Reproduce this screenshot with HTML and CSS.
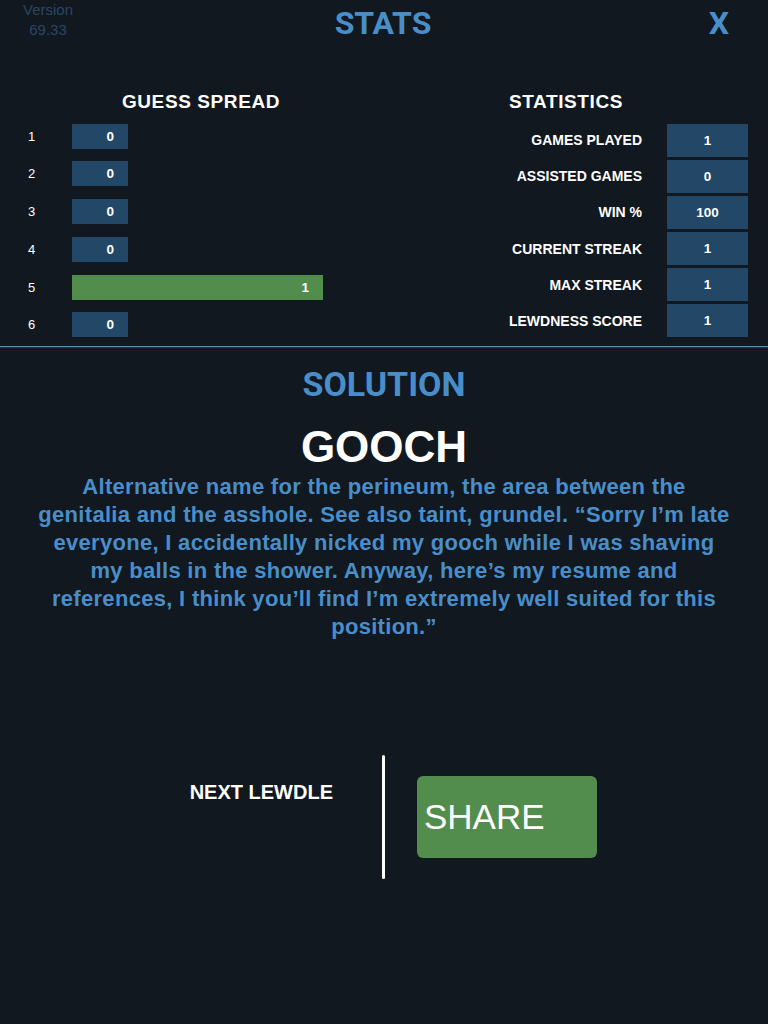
FILE: index.html
```html
<!DOCTYPE html>
<html>
<head>
<meta charset="utf-8">
<link rel="stylesheet" href="styles.css">
</head>
<body>
<div class="page">
  <header class="header">
    <div class="version">Version<br>69.33</div>
    <div class="title">STATS</div>
    <div class="close">X</div>
  </header>

  <section class="stats">
    <div class="spread">
      <div class="col-title spread-title">GUESS SPREAD</div>
      <div class="rows">
        <div class="grow"><span class="gnum">1</span><div class="bar" style="width:56px">0</div></div>
        <div class="grow"><span class="gnum">2</span><div class="bar" style="width:56px">0</div></div>
        <div class="grow"><span class="gnum">3</span><div class="bar" style="width:56px">0</div></div>
        <div class="grow"><span class="gnum">4</span><div class="bar" style="width:56px">0</div></div>
        <div class="grow"><span class="gnum">5</span><div class="bar bar-win" style="width:251px">1</div></div>
        <div class="grow"><span class="gnum">6</span><div class="bar" style="width:56px">0</div></div>
      </div>
    </div>
    <div class="statistics">
      <div class="col-title stat-title">STATISTICS</div>
      <div class="srows">
        <div class="srow"><span class="slabel">GAMES PLAYED</span><span class="sval">1</span></div>
        <div class="srow"><span class="slabel">ASSISTED GAMES</span><span class="sval">0</span></div>
        <div class="srow"><span class="slabel">WIN %</span><span class="sval">100</span></div>
        <div class="srow"><span class="slabel">CURRENT STREAK</span><span class="sval">1</span></div>
        <div class="srow"><span class="slabel">MAX STREAK</span><span class="sval">1</span></div>
        <div class="srow"><span class="slabel">LEWDNESS SCORE</span><span class="sval">1</span></div>
      </div>
    </div>
  </section>

  <div class="rule"></div>

  <section class="solution">
    <div class="sol-title">SOLUTION</div>
    <div class="word">GOOCH</div>
    <p class="definition">Alternative name for the perineum, the area between the<br>genitalia and the asshole. See also taint, grundel. “Sorry I’m late<br>everyone, I accidentally nicked my gooch while I was shaving<br>my balls in the shower. Anyway, here’s my resume and<br>references, I think you’ll find I’m extremely well suited for this<br>position.”</p>
  </section>

  <section class="footer">
    <div class="next">NEXT LEWDLE</div>
    <div class="divider"></div>
    <div class="share-wrap"><button class="share">SHARE</button></div>
  </section>
</div>
</body>
</html>
```

FILE: styles.css
```css
* { box-sizing: border-box; }
html, body { margin: 0; padding: 0; background: #111820; }
.page {
  width: 768px;
  height: 1024px;
  background: #111820;
  font-family: "Liberation Sans", Arial, sans-serif;
  color: #ffffff;
  overflow: hidden;
}
.header {
  display: flex;
  justify-content: space-between;
  align-items: flex-start;
  height: 48px;
}
.version {
  width: 96px;
  text-align: center;
  font-size: 15px;
  line-height: 19.5px;
  color: #2b4662;
}
.title, .close {
  font-family: Roboto, "Liberation Sans", sans-serif;
  font-weight: 700;
  font-size: 32px;
  line-height: 47px;
  color: #4a8ec9;
}
.close {
  width: 98px;
  text-align: center;
}
.stats {
  display: flex;
  padding-top: 43px;
}
.spread, .statistics {
  width: 384px;
}
.col-title {
  font-weight: 700;
  font-size: 19px;
  line-height: 22px;
  letter-spacing: 0.6px;
  text-align: center;
  color: #ffffff;
}
.spread-title { padding-left: 18px; }
.stat-title { padding-right: 20px; }
.rows {
  display: flex;
  flex-direction: column;
  gap: 12.8px;
  margin-top: 10.5px;
}
.grow {
  display: flex;
  align-items: center;
  height: 25px;
  padding-left: 28px;
}
.gnum {
  width: 44px;
  font-size: 13px;
  color: #ffffff;
}
.bar {
  height: 25px;
  background: #234766;
  color: #ffffff;
  font-weight: 700;
  font-size: 13.5px;
  line-height: 25px;
  text-align: right;
  padding-right: 14px;
}
.bar-win { background: #538d4e; }
.srows {
  display: flex;
  flex-direction: column;
  gap: 3.2px;
  margin-top: 10.5px;
  padding-right: 20px;
}
.srow {
  display: flex;
  justify-content: flex-end;
  align-items: center;
  gap: 25px;
}
.slabel {
  font-weight: 700;
  font-size: 14px;
  color: #ffffff;
}
.sval {
  width: 81px;
  height: 33px;
  background: #234766;
  font-weight: 700;
  font-size: 13.5px;
  line-height: 33px;
  text-align: center;
}
.rule {
  margin-top: 9px;
  height: 2px;
  border-top: 1px solid #5a8cb4;
  border-bottom: 1px solid #1d3550;
}
.solution {
  display: flex;
  flex-direction: column;
  align-items: center;
  padding-top: 16px;
}
.sol-title {
  font-family: Roboto, "Liberation Sans", sans-serif;
  font-weight: 700;
  font-size: 34px;
  line-height: 40px;
  color: #4a8ec9;
}
.word {
  margin-top: 18px;
  font-weight: 700;
  font-size: 44px;
  line-height: 50px;
  color: #ffffff;
}
.definition {
  margin: 1px 0 0 0;
  width: 740px;
  font-weight: 700;
  font-size: 22px;
  line-height: 28px;
  letter-spacing: 0.3px;
  text-align: center;
  white-space: nowrap;
  color: #4a8ec9;
}
.footer {
  display: flex;
  align-items: center;
  margin-top: 114px;
}
.next {
  flex: 0 0 382px;
  text-align: right;
  padding-right: 49px;
  font-weight: 700;
  font-size: 20px;
  line-height: 24px;
  align-self: flex-start;
  margin-top: 25px;
}
.divider {
  width: 3px;
  height: 124px;
  background: #ffffff;
  border-radius: 2px;
}
.share-wrap {
  padding-left: 32px;
}
.share {
  width: 180px;
  height: 82px;
  border: none;
  border-radius: 6px;
  background: #538d4e;
  color: #ffffff;
  font-family: "Liberation Sans", Arial, sans-serif;
  font-size: 35px;
  text-align: left;
  padding: 0 0 0 7px;
}
```
